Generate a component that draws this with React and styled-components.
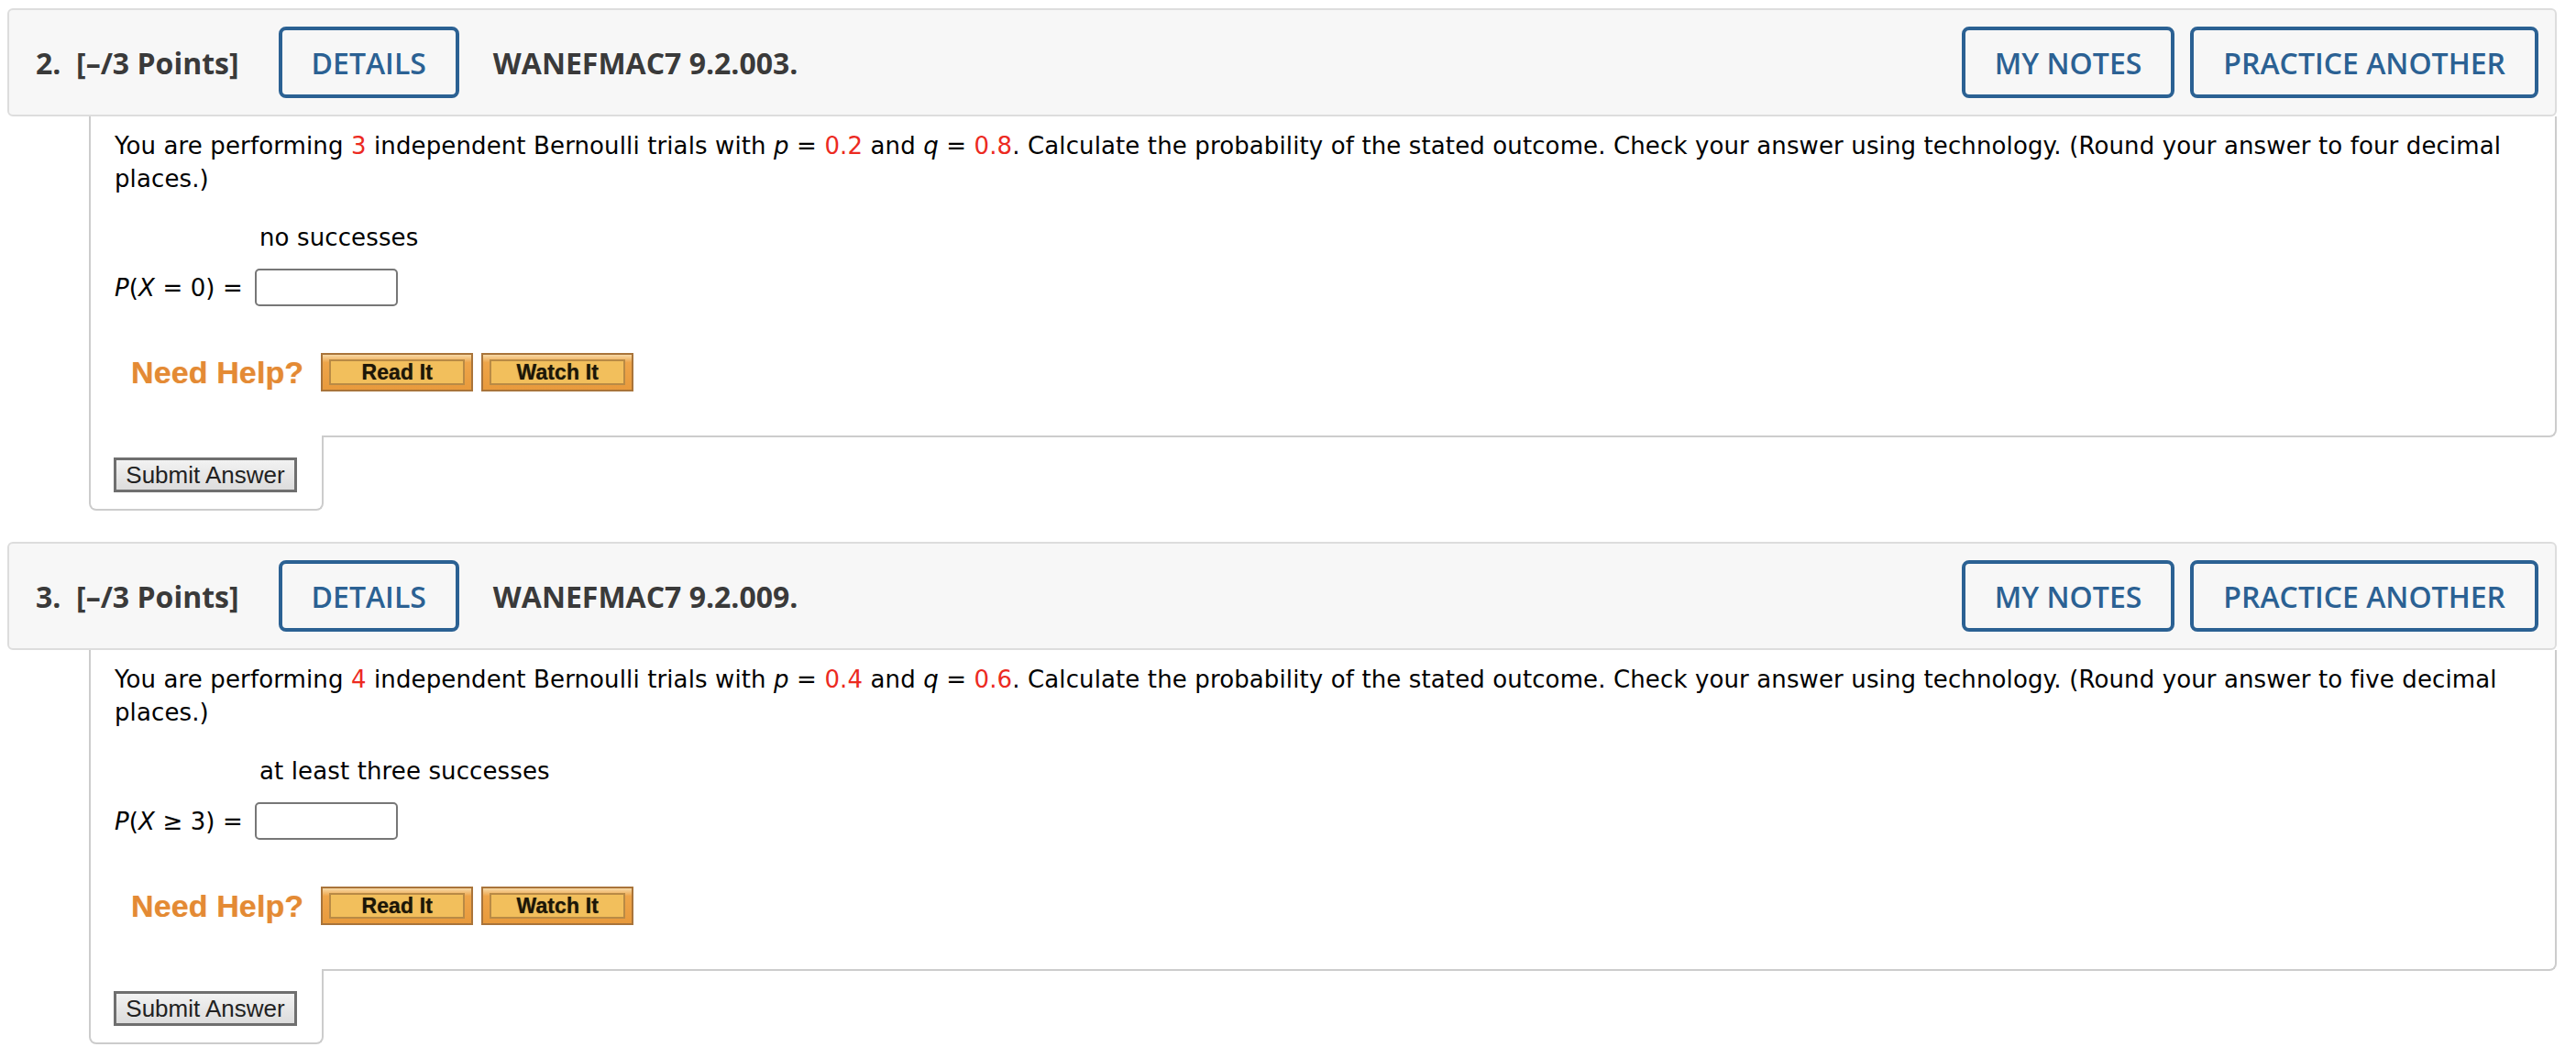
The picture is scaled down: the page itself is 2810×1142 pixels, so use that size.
import styled, { createGlobalStyle } from "styled-components";

const GlobalStyle = createGlobalStyle`
  html, body {
    margin: 0;
    padding: 0;
    background: #ffffff;
  }
`;

const Page = styled.div`
  padding: 9px 21px 0 8px;
`;

const Question = styled.section`
  margin-bottom: 34px;
`;

const Header = styled.div`
  display: flex;
  align-items: center;
  height: 114px;
  padding: 0 18px 0 29px;
  background: #f7f7f7;
  border: 2px solid #dddddd;
  border-radius: 6px;
  font-family: "Open Sans", "Liberation Sans", sans-serif;
  color: #3a3a3a;
`;

const Label = styled.div`
  font-size: 32px;
  font-weight: 700;
  white-space: pre;
  margin-right: 43px;
`;

const Code = styled.div`
  font-size: 32px;
  font-weight: 700;
  margin-left: 37px;
`;

const Spacer = styled.div`
  flex: 1;
`;

const OutlineButton = styled.button`
  height: 78px;
  padding: 0 32px;
  margin-left: ${(p) => (p.$gap ? "17px" : "0")};
  background: transparent;
  border: 4px solid #2b6193;
  border-radius: 8px;
  color: #2b6193;
  font-family: "Open Sans", "Liberation Sans", sans-serif;
  font-size: 32px;
  font-weight: 600;
  white-space: nowrap;
`;

const Body = styled.div`
  margin-left: 89px;
  padding: 14px 20px 48px 26px;
  border: 2px solid #cccccc;
  border-top: none;
  border-bottom-right-radius: 8px;
  font-family: "DejaVu Sans", Verdana, sans-serif;
  font-size: 26px;
  letter-spacing: 0.12px;
  line-height: 36px;
  color: #000000;
`;

const Text = styled.p`
  margin: 0 0 28px;
`;

const Red = styled.span`
  color: #ec2a1f;
`;

const Var = styled.i`
  font-style: italic;
`;

const Outcome = styled.div`
  margin: 0 0 16px 158px;
`;

const AnswerRow = styled.div`
  display: flex;
  align-items: center;
  gap: 13px;
`;

const AnswerInput = styled.input`
  width: 152px;
  height: 37px;
  padding: 0;
  border: 2px solid #777777;
  border-radius: 5px;
  background: #ffffff;
`;

const HelpRow = styled.div`
  display: flex;
  align-items: center;
  margin: 51px 0 0 18px;
`;

const HelpLabel = styled.span`
  font-family: "Liberation Sans", Arial, sans-serif;
  font-weight: 700;
  font-size: 34px;
  color: #e48a34;
  margin-right: 19px;
  text-shadow: 0 0 1px rgba(228, 138, 52, 0.6);
`;

const HelpButton = styled.div`
  box-sizing: border-box;
  width: 166px;
  height: 42px;
  padding: 5px 7px;
  margin-right: 9px;
  border: 2px solid #a9743a;
  background: linear-gradient(#f7d9a6 0%, #eea54a 22%, #e89a3c 100%);
`;

const HelpInner = styled.div`
  height: 100%;
  box-sizing: border-box;
  display: flex;
  align-items: center;
  justify-content: center;
  border: 2px solid #b98a45;
  background: #f2bf5c;
  font-family: "Liberation Sans", Arial, sans-serif;
  font-weight: 700;
  font-size: 23px;
  color: #1c1608;
  text-shadow: 0 0 1px rgba(0, 0, 0, 0.6);
`;

const SubmitTab = styled.div`
  box-sizing: border-box;
  width: 256px;
  margin: -2px 0 0 89px;
  padding: 24px 0 18px 25px;
  background: #ffffff;
  border: 2px solid #cccccc;
  border-top: none;
  border-radius: 0 0 8px 8px;
  position: relative;
`;

const SubmitButton = styled.button`
  width: 200px;
  height: 38px;
  padding: 0;
  border: 3px solid #6f6f6f;
  background: linear-gradient(#f2f2f2, #dcdcdc);
  font-family: "Liberation Sans", Arial, sans-serif;
  font-size: 26px;
  color: #222222;
`;

const questions = [
  {
    num: "2.",
    code: "WANEFMAC7 9.2.003.",
    n: "3",
    p: "0.2",
    q: "0.8",
    places: "four",
    outcome: "no successes",
    expr: (
      <>
        <Var>P</Var>(<Var>X</Var> = 0) =
      </>
    ),
  },
  {
    num: "3.",
    code: "WANEFMAC7 9.2.009.",
    n: "4",
    p: "0.4",
    q: "0.6",
    places: "five",
    outcome: "at least three successes",
    expr: (
      <>
        <Var>P</Var>(<Var>X</Var> ≥ 3) =
      </>
    ),
  },
];

const QuestionBlock = ({ item }) => (
  <Question>
    <Header>
      <Label>{item.num}  [–/3 Points]</Label>
      <OutlineButton>DETAILS</OutlineButton>
      <Code>{item.code}</Code>
      <Spacer />
      <OutlineButton>MY NOTES</OutlineButton>
      <OutlineButton $gap>PRACTICE ANOTHER</OutlineButton>
    </Header>
    <Body>
      <Text>
        You are performing <Red>{item.n}</Red> independent Bernoulli trials
        with <Var>p</Var> = <Red>{item.p}</Red> and <Var>q</Var> ={" "}
        <Red>{item.q}</Red>. Calculate the probability of the stated outcome.
        Check your answer using technology. (Round your answer to{" "}
        {item.places} decimal places.)
      </Text>
      <Outcome>{item.outcome}</Outcome>
      <AnswerRow>
        <span>{item.expr}</span>
        <AnswerInput type="text" />
      </AnswerRow>
      <HelpRow>
        <HelpLabel>Need Help?</HelpLabel>
        <HelpButton>
          <HelpInner>Read It</HelpInner>
        </HelpButton>
        <HelpButton>
          <HelpInner>Watch It</HelpInner>
        </HelpButton>
      </HelpRow>
    </Body>
    <SubmitTab>
      <SubmitButton>Submit Answer</SubmitButton>
    </SubmitTab>
  </Question>
);

export default function App() {
  return (
    <>
      <GlobalStyle />
      <Page>
        {questions.map((item) => (
          <QuestionBlock key={item.num} item={item} />
        ))}
      </Page>
    </>
  );
}
